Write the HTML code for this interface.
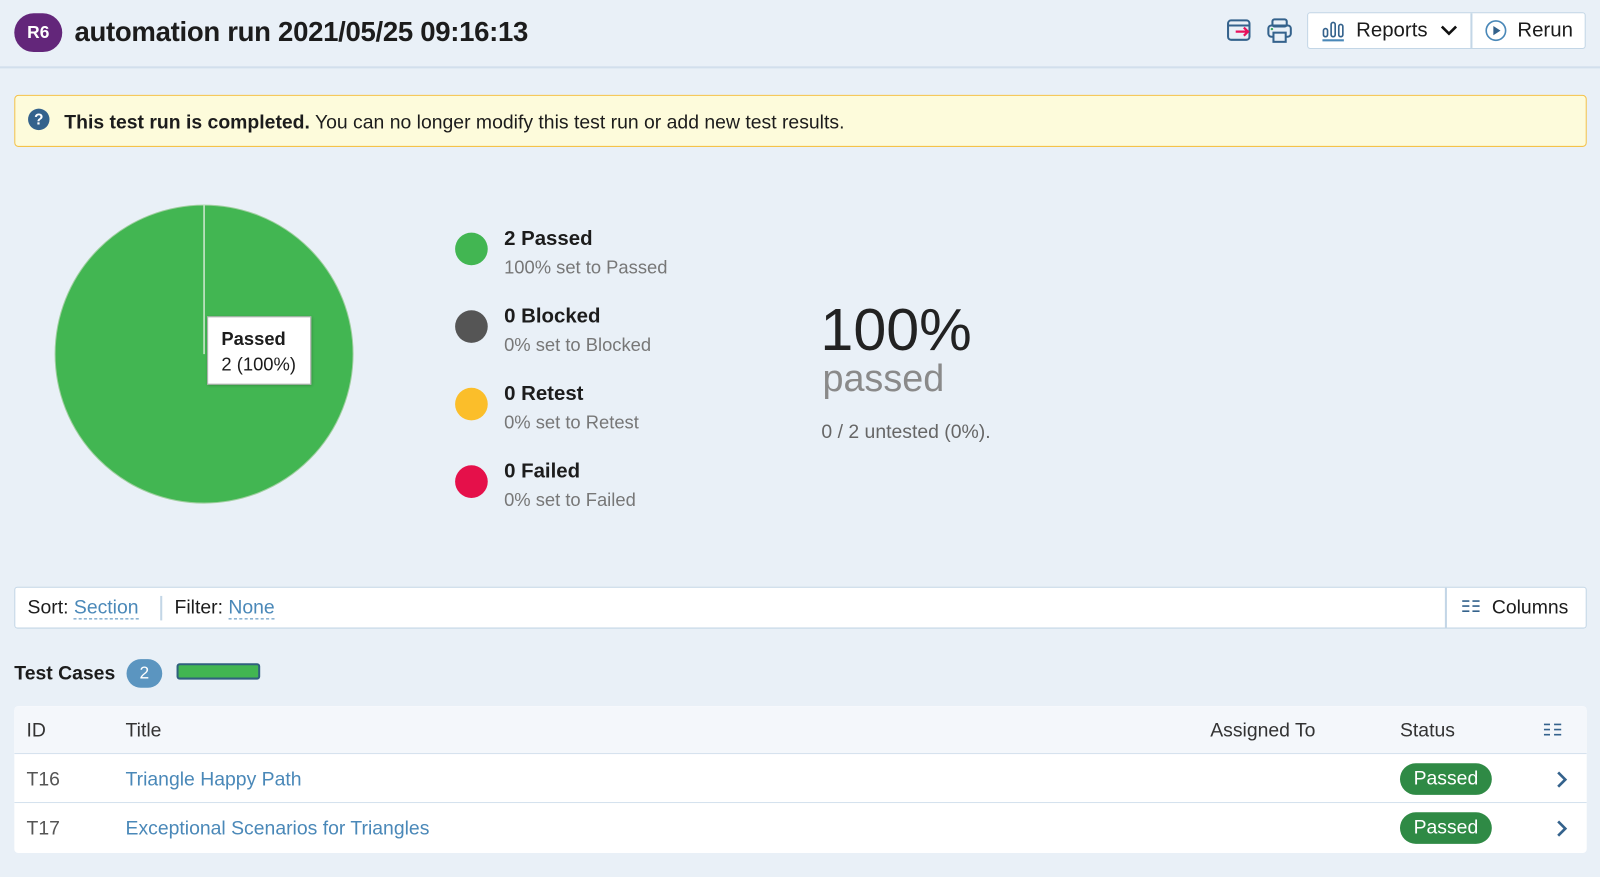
<!DOCTYPE html>
<html><head><meta charset="utf-8"><style>
*{box-sizing:border-box;margin:0;padding:0}
html,body{width:1600px;height:877px;background:#e9f0f7;overflow:hidden}
body{font-family:"Liberation Sans",sans-serif;color:#1c1c1c;position:relative}
#w{position:absolute;left:0;top:0;width:1568px;height:860px;transform:scale(1.0204);transform-origin:0 0}
.abs{position:absolute}
a{color:#4a88b8;text-decoration:none}
.dash{border-bottom:1.5px dashed #4a88b8}
</style></head><body><div id="w">
<div class="abs" style="left:14px;top:13px;width:47px;height:38px;border-radius:19px;background:#63267a;color:#fff;font-weight:bold;font-size:17px;text-align:center;line-height:38px">R6</div>
<div class="abs" style="left:73px;top:16px;font-size:27px;font-weight:bold;letter-spacing:-0.3px">automation run 2021/05/25 09:16:13</div>
<svg class="abs" style="left:1202px;top:18px" width="26" height="24" viewBox="0 0 26 24"><rect x="1.5" y="2" width="21" height="19" rx="3" fill="none" stroke="#34628c" stroke-width="2"/><line x1="1.5" y1="7" x2="22.5" y2="7" stroke="#34628c" stroke-width="2"/><path d="M9 13h12M17 9l4 4-4 4" fill="none" stroke="#e8115c" stroke-width="2.2"/></svg>
<svg class="abs" style="left:1241px;top:17px" width="26" height="26" viewBox="0 0 26 26"><rect x="6" y="2" width="14" height="7" rx="2" fill="none" stroke="#34628c" stroke-width="2"/><rect x="2" y="8" width="22" height="11" rx="3" fill="none" stroke="#34628c" stroke-width="2"/><rect x="7" y="15" width="12" height="9" fill="#e9f0f7" stroke="#34628c" stroke-width="2"/><circle cx="5.5" cy="11.5" r="1.2" fill="#3aa860"/></svg>
<div class="abs" style="left:1281px;top:12px;width:273px;height:36px;background:#fff;border:1.5px solid #c3d6e6;border-radius:3px"></div>
<div class="abs" style="left:1441px;top:13px;width:1.5px;height:34px;background:#c3d6e6"></div>
<svg class="abs" style="left:1295px;top:19px" width="24" height="22" viewBox="0 0 24 22"><g fill="none" stroke="#34628c" stroke-width="1.6"><rect x="2" y="9" width="4" height="8" rx="2"/><rect x="9.5" y="3" width="4" height="14" rx="2"/><rect x="17" y="5" width="4" height="12" rx="2"/></g><line x1="1" y1="20.5" x2="22" y2="20.5" stroke="#4a88b8" stroke-width="2"/></svg>
<div class="abs" style="left:1329px;top:19px;font-size:20px">Reports</div>
<svg class="abs" style="left:1411px;top:23px" width="18" height="14"><path d="M2 3l7 7 7-7" fill="none" stroke="#111" stroke-width="2.6"/></svg>
<svg class="abs" style="left:1455px;top:19px" width="22" height="22"><circle cx="11" cy="11" r="9.5" fill="none" stroke="#4a88b8" stroke-width="1.6"/><path d="M8.5 6.5v9l7-4.5z" fill="#34628c"/></svg>
<div class="abs" style="left:1487px;top:19px;font-size:20px">Rerun</div>
<div class="abs" style="left:0;top:65px;width:1600px;height:1.5px;background:#d2dfec"></div>

<div class="abs" style="left:14px;top:93px;width:1541px;height:51px;background:#fdfbdb;border:1.5px solid #f4c24a;border-radius:4px"></div>
<svg class="abs" style="left:27px;top:106px" width="22" height="22"><circle cx="11" cy="11" r="10.5" fill="#34628c"/><text x="11" y="16" font-family="Liberation Sans" font-weight="bold" font-size="15" fill="#fff" text-anchor="middle">?</text></svg>
<div class="abs" style="left:63px;top:110px;font-size:19px"><b>This test run is completed.</b> You can no longer modify this test run or add new test results.</div>

<svg class="abs" style="left:52px;top:199px" width="296" height="296"><circle cx="148" cy="148" r="146" fill="#42b652" stroke="#9fcf9f" stroke-width="1"/><line x1="148" y1="2" x2="148" y2="148" stroke="#cfe8cf" stroke-width="1.5"/></svg>
<div class="abs" style="left:203px;top:310px;width:102px;height:67px;background:#fff;border:1px solid #aaa;box-shadow:1px 1px 3px rgba(0,0,0,.3);padding:9px 0 0 13px;font-size:18px;line-height:25px"><b>Passed</b><br>2 (100%)</div>

<div class="abs" style="left:446px;top:228px;width:32px;height:32px;border-radius:50%;background:#42b652"></div>
<div class="abs" style="left:446px;top:304px;width:32px;height:32px;border-radius:50%;background:#555"></div>
<div class="abs" style="left:446px;top:380px;width:32px;height:32px;border-radius:50%;background:#fbbe2a"></div>
<div class="abs" style="left:446px;top:456px;width:32px;height:32px;border-radius:50%;background:#e5104a"></div>
<div class="abs" style="left:494px;top:220px;font-size:20px;line-height:28px"><b>2 Passed</b><br><span style="font-size:18px;color:#777">100% set to Passed</span></div>
<div class="abs" style="left:494px;top:296px;font-size:20px;line-height:28px"><b>0 Blocked</b><br><span style="font-size:18px;color:#777">0% set to Blocked</span></div>
<div class="abs" style="left:494px;top:372px;font-size:20px;line-height:28px"><b>0 Retest</b><br><span style="font-size:18px;color:#777">0% set to Retest</span></div>
<div class="abs" style="left:494px;top:448px;font-size:20px;line-height:28px"><b>0 Failed</b><br><span style="font-size:18px;color:#777">0% set to Failed</span></div>

<div class="abs" style="left:804px;top:290px;font-size:58px;color:#222;letter-spacing:0px">100%</div>
<div class="abs" style="left:806px;top:350px;font-size:37px;color:#8a8a8a">passed</div>
<div class="abs" style="left:805px;top:413px;font-size:19px;color:#666">0 / 2 untested (0%).</div>

<div class="abs" style="left:14px;top:575px;width:1541px;height:41px;background:#fff;border:1.5px solid #c3d6e6;border-radius:3px"></div>
<div class="abs" style="left:27px;top:585px;font-size:19px">Sort: <a class="dash">Section</a></div>
<div class="abs" style="left:157px;top:584px;width:1.5px;height:24px;background:#c3d6e6"></div>
<div class="abs" style="left:171px;top:585px;font-size:19px">Filter: <a class="dash">None</a></div>
<div class="abs" style="left:1416px;top:576px;width:1.5px;height:39px;background:#c3d6e6"></div>
<svg class="abs" style="left:1432px;top:587px" width="20" height="16"><g stroke="#34628c" stroke-width="1.6"><path d="M1 2h7M1 7h7M1 12h7M11 2h7M11 7h7M11 12h7"/></g></svg>
<div class="abs" style="left:1462px;top:585px;font-size:19px">Columns</div>

<div class="abs" style="left:14px;top:650px;font-size:19px;font-weight:bold">Test Cases</div>
<div class="abs" style="left:124px;top:646px;width:35px;height:28px;border-radius:14px;background:#5b95c0;color:#fff;font-size:17px;text-align:center;line-height:28px">2</div>
<div class="abs" style="left:173px;top:650px;width:82px;height:16px;border-radius:3px;background:#42b652;border:2.5px solid #30607e"></div>

<div class="abs" style="left:14px;top:692px;width:1541px;height:144px;background:#fff;border-radius:4px;overflow:hidden">
 <div style="height:47px;background:#f4f7fb;border-bottom:1.5px solid #d4e1ed"></div>
 <div style="height:48px;border-bottom:1.5px solid #d4e1ed"></div>
</div>
<div class="abs" style="left:26px;top:706px;font-size:19px;color:#333">ID</div>
<div class="abs" style="left:123px;top:706px;font-size:19px;color:#333">Title</div>
<div class="abs" style="left:1186px;top:706px;font-size:19px;color:#333">Assigned To</div>
<div class="abs" style="left:1372px;top:706px;font-size:19px;color:#333">Status</div>
<svg class="abs" style="left:1513px;top:708px" width="18" height="16"><g stroke="#34628c" stroke-width="1.6"><path d="M0 2h6M0 7h6M0 12h6M10 2h7M10 7h7M10 12h7"/></g></svg>
<div class="abs" style="left:26px;top:754px;font-size:19px;color:#555">T16</div>
<div class="abs" style="left:123px;top:754px;font-size:19px"><a>Triangle Happy Path</a></div>
<div class="abs" style="left:26px;top:802px;font-size:19px;color:#555">T17</div>
<div class="abs" style="left:123px;top:802px;font-size:19px"><a>Exceptional Scenarios for Triangles</a></div>
<div class="abs" style="left:1372px;top:748px;width:90px;height:31px;border-radius:16px;background:#2f8a45;color:#fff;font-size:19px;text-align:center;line-height:31px">Passed</div>
<div class="abs" style="left:1372px;top:796px;width:90px;height:31px;border-radius:16px;background:#2f8a45;color:#fff;font-size:19px;text-align:center;line-height:31px">Passed</div>
<svg class="abs" style="left:1524px;top:755px" width="14" height="18"><path d="M3 2l7 7-7 7" fill="none" stroke="#34628c" stroke-width="2.6"/></svg>
<svg class="abs" style="left:1524px;top:803px" width="14" height="18"><path d="M3 2l7 7-7 7" fill="none" stroke="#34628c" stroke-width="2.6"/></svg>
</div></body></html>
